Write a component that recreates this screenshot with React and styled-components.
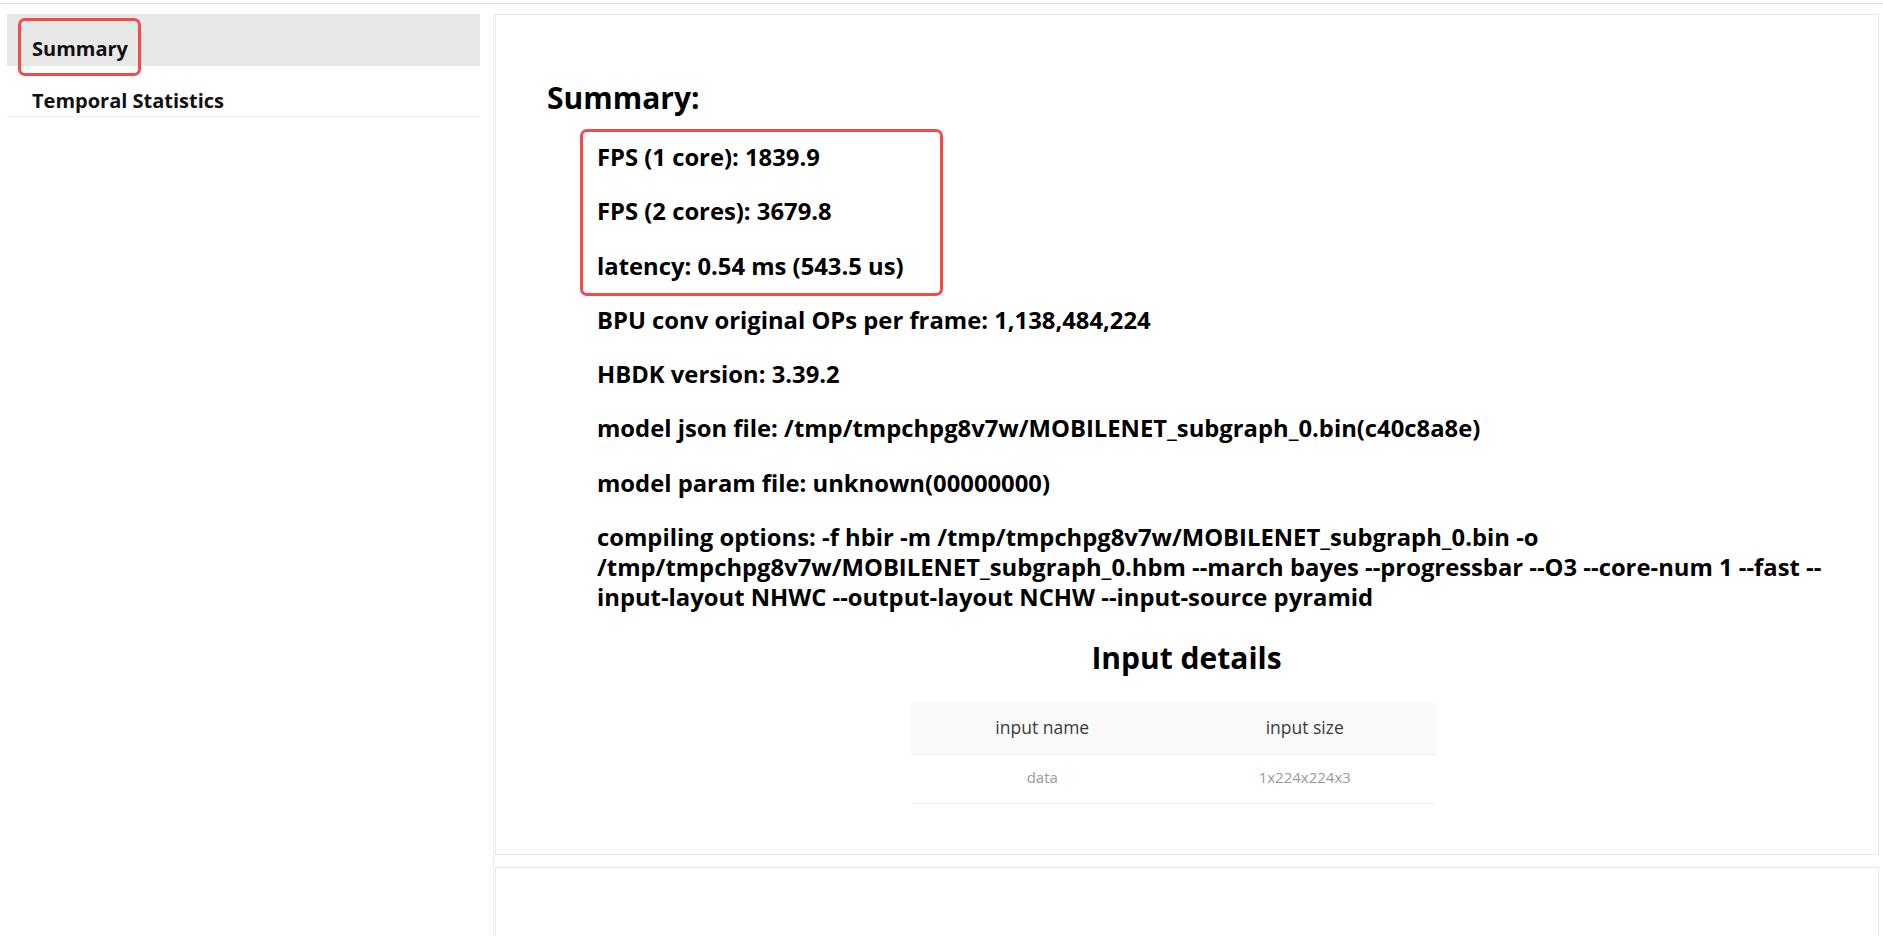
import React from "react";
import styled, { createGlobalStyle } from "styled-components";

const GlobalStyle = createGlobalStyle`
  html, body { margin: 0; padding: 0; height: 100%; overflow: hidden; background: #fff; }
  body { font-family: "Open Sans", "Noto Sans", sans-serif; color: #000; }
  #root { height: 100%; }
`;

const Page = styled.div`
  height: 100%;
  box-sizing: border-box;
  padding-top: 3px;
  display: flex;
  flex-direction: column;
`;

const TopRule = styled.div`
  flex: none;
  height: 1px;
  background: #dcdcdc;
`;

const Layout = styled.div`
  flex: 1;
  min-height: 0;
  display: grid;
  grid-template-columns: 487px 1fr;
  column-gap: 1px;
  padding: 10px 4px 0 7px;
`;

const Sidebar = styled.nav`
  border-right: 1px solid #ececec;
  padding-right: 13px;
`;

const NavItem = styled.div`
  position: relative;
  box-sizing: border-box;
  height: ${(p) => (p.$active ? "52px" : "51px")};
  padding: 21px 0 0 25px;
  font-size: 20px;
  line-height: 27px;
  font-weight: 700;
  color: #111;
  background: ${(p) => (p.$active ? "#e8e8e8" : "transparent")};
  border-bottom: ${(p) => (p.$active ? "none" : "1px solid #eeeeee")};
`;

const Mark = styled.span`
  position: absolute;
  z-index: 2;
  box-sizing: border-box;
  border: 3px solid #f24b4b;
  border-radius: 7px;
  pointer-events: none;
`;

const NavMark = styled(Mark)`
  left: 11px;
  top: 4px;
  width: 123px;
  height: 58px;
`;

const Main = styled.main`
  display: flex;
  flex-direction: column;
  gap: 12px;
  min-height: 0;
`;

const Card = styled.section`
  flex: none;
  border: 1px solid #e6e6e6;
  padding: 63px 52px 50px 51px;
`;

const EmptyCard = styled.section`
  flex: 1;
  border: 1px solid #e6e6e6;
  border-bottom: none;
  min-height: 0;
`;

const Heading = styled.h2`
  margin: 0;
  font-size: 30px;
  line-height: 40px;
  font-weight: 700;
`;

const List = styled.div`
  display: flex;
  flex-direction: column;
  gap: 24.3px;
  padding-left: 50px;
  margin-top: 24px;
`;

const Highlight = styled.div`
  position: relative;
  display: flex;
  flex-direction: column;
  gap: 24.3px;
`;

const GroupMark = styled(Mark)`
  left: -17px;
  top: -13px;
  width: 363px;
  bottom: -15px;
`;

const Item = styled.p`
  margin: 0;
  font-size: 23.8px;
  line-height: 30px;
  font-weight: 700;
  white-space: ${(p) => (p.$nowrap ? "nowrap" : "normal")};
`;

const SubHeading = styled.h3`
  margin: 26px 0 0;
  text-align: center;
  font-size: 30px;
  line-height: 40px;
  font-weight: 700;
`;

const TableWrap = styled.div`
  margin: 25px 0 0 364px;
  width: 525px;
`;

const Table = styled.table`
  width: 100%;
  border-collapse: collapse;
  table-layout: fixed;
`;

const Th = styled.th`
  height: 51px;
  box-sizing: border-box;
  background: #fafafa;
  border-bottom: 1px solid #f0f0f0;
  font-size: 17.5px;
  font-weight: 400;
  color: #3a3a3a;
  text-align: center;
  padding: 0 0 3px;
`;

const Td = styled.td`
  height: 49px;
  box-sizing: border-box;
  border-bottom: 1px solid #f0f0f0;
  font-size: 15px;
  font-weight: 400;
  color: #9a9a9a;
  text-align: center;
  padding: 0 0 3px;
`;

export default function App() {
  return (
    <>
      <GlobalStyle />
      <Page>
        <TopRule />
        <Layout>
          <Sidebar>
            <NavItem $active>
              Summary
              <NavMark />
            </NavItem>
            <NavItem>Temporal Statistics</NavItem>
          </Sidebar>
          <Main>
            <Card>
              <Heading>Summary:</Heading>
              <List>
                <Highlight>
                  <Item>FPS (1 core): 1839.9</Item>
                  <Item>FPS (2 cores): 3679.8</Item>
                  <Item>latency: 0.54 ms (543.5 us)</Item>
                  <GroupMark />
                </Highlight>
                <Item>BPU conv original OPs per frame: 1,138,484,224</Item>
                <Item>HBDK version: 3.39.2</Item>
                <Item>model json file: /tmp/tmpchpg8v7w/MOBILENET_subgraph_0.bin(c40c8a8e)</Item>
                <Item>model param file: unknown(00000000)</Item>
                <Item $nowrap>
                  compiling options: -f hbir -m /tmp/tmpchpg8v7w/MOBILENET_subgraph_0.bin -o
                  <br />
                  /tmp/tmpchpg8v7w/MOBILENET_subgraph_0.hbm --march bayes --progressbar --O3 --core-num 1 --fast --
                  <br />
                  input-layout NHWC --output-layout NCHW --input-source pyramid
                </Item>
              </List>
              <SubHeading>Input details</SubHeading>
              <TableWrap>
                <Table>
                  <thead>
                    <tr>
                      <Th>input name</Th>
                      <Th>input size</Th>
                    </tr>
                  </thead>
                  <tbody>
                    <tr>
                      <Td>data</Td>
                      <Td>1x224x224x3</Td>
                    </tr>
                  </tbody>
                </Table>
              </TableWrap>
            </Card>
            <EmptyCard />
          </Main>
        </Layout>
      </Page>
    </>
  );
}
